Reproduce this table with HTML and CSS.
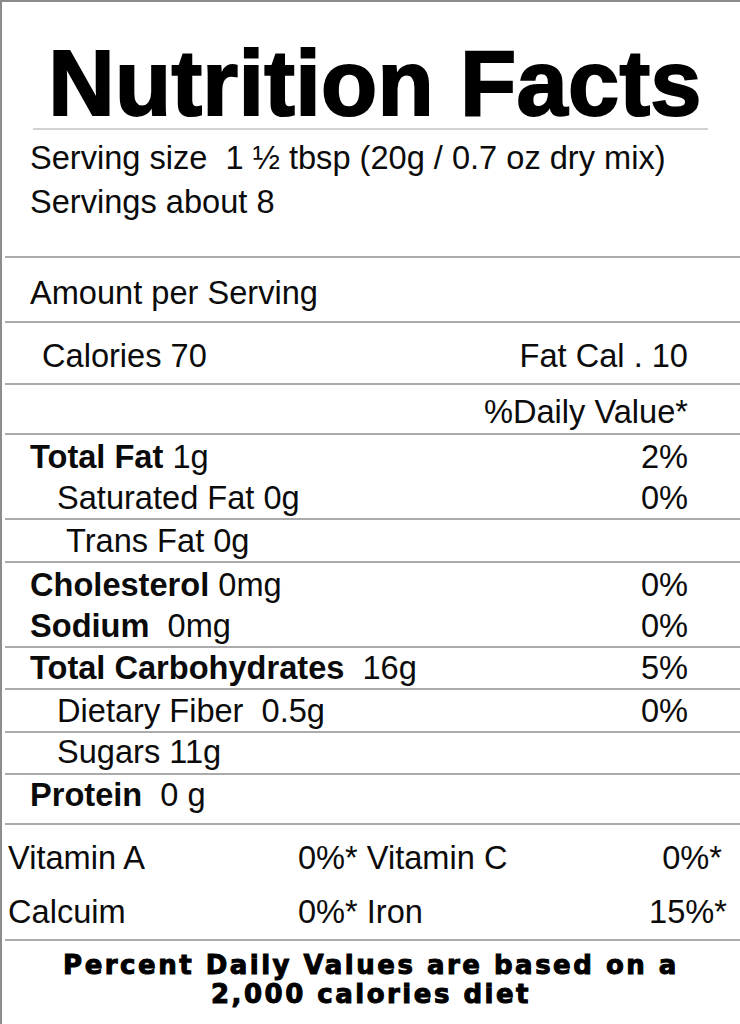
FILE: index.html
```html
<!DOCTYPE html>
<html lang="en">
<head>
<meta charset="utf-8">
<title>Nutrition Facts</title>
<link rel="stylesheet" href="styles.css">
</head>
<body>
<div class="label">
  <header class="title-block"><h1 class="title">Nutrition Facts</h1></header>
  <div class="title-rule"></div>

  <section class="sec serving">
    <p class="sline">Serving size  1 ½ tbsp (20g / 0.7 oz dry mix)</p>
    <p class="sline">Servings about 8</p>
  </section>

  <section class="sec row amount"><span>Amount per Serving</span></section>

  <section class="sec row calories"><span>Calories 70</span><span>Fat Cal . 10</span></section>

  <section class="sec row dv"><span></span><span>%Daily Value*</span></section>

  <section class="sec group g2">
    <div class="nrow"><span><b>Total Fat</b> 1g</span><span>2%</span></div>
    <div class="nrow sub"><span>Saturated Fat 0g</span><span>0%</span></div>
  </section>

  <section class="sec row trans"><span>Trans Fat 0g</span></section>

  <section class="sec group g2">
    <div class="nrow"><span><b>Cholesterol</b> 0mg</span><span>0%</span></div>
    <div class="nrow"><span><b>Sodium</b>  0mg</span><span>0%</span></div>
  </section>

  <section class="sec row carbs"><span><b>Total Carbohydrates</b>  16g</span><span>5%</span></section>

  <section class="sec row fiber sub"><span>Dietary Fiber  0.5g</span><span>0%</span></section>

  <section class="sec row sugars sub"><span>Sugars 11g</span></section>

  <section class="sec row protein"><span><b>Protein</b>  0 g</span></section>

  <section class="sec vitamins">
    <div class="vrow"><span>Vitamin A</span><span>0%* Vitamin C</span><span class="vpct">0%*</span></div>
    <div class="vrow"><span>Calcuim</span><span>0%* Iron</span><span class="vpct wide">15%*</span></div>
  </section>

  <footer class="foot">
    <p>Percent Daily Values are based on a</p>
    <p>2,000 calories diet</p>
  </footer>
</div>
</body>
</html>
```

FILE: styles.css
```css
* { box-sizing: border-box; margin: 0; padding: 0; }

html, body { background: #ffffff; }

body {
  width: 740px;
  height: 1024px;
  overflow: hidden;
  font-family: "Liberation Sans", Arial, sans-serif;
  font-size: 32.6px;
  color: #0b0b0b;
}

.label {
  height: 1024px;
  border-left: 2px solid #8c8c8c;
  border-top: 2px solid #8c8c8c;
}

/* Title */
.title-block {
  height: 126px;
  padding-top: 35px;
  text-align: center;
}

.title {
  font-size: 92px;
  line-height: 92px;
  font-weight: 700;
  color: #000;
  -webkit-text-stroke: 2px #000;
  letter-spacing: 0.3px;
  padding-left: 8px;
}

.title-rule {
  height: 2px;
  margin: 0 32px 0 31px;
  background: #d2d2d2;
}

/* Sections */
.sec {
  margin-left: 3px;
  border-bottom: 2px solid #ababab;
}

.row {
  display: flex;
  justify-content: space-between;
  align-items: center;
  padding-left: 25px;
  padding-right: 52px;
  line-height: 36px;
  white-space: pre;
}

.row b, .nrow b { font-weight: 700; }

.serving {
  height: 128px;
  padding-top: 6px;
  padding-left: 25px;
}

.sline {
  line-height: 44px;
  white-space: pre;
}

.amount { height: 65px; padding-top: 7px; }
.calories { height: 62px; padding-top: 6px; padding-left: 37px; }
.dv { height: 50px; padding-top: 6px; }

.group {
  height: 85px;
  display: flex;
  flex-direction: column;
  padding-top: 1px;
}

.nrow {
  flex: 1;
  display: flex;
  justify-content: space-between;
  align-items: center;
  padding-left: 25px;
  padding-right: 52px;
  white-space: pre;
  line-height: 36px;
}

.nrow.sub, .row.sub { padding-left: 52px; }

.trans { height: 43px; padding-left: 61px; }
.carbs { height: 42px; }
.fiber { height: 43px; }
.sugars { height: 42px; padding-bottom: 3px; }
.protein { height: 50px; padding-bottom: 8px; }

/* Vitamins */
.vitamins {
  height: 116px;
  padding: 6px 18px 0 3px;
}

.vrow {
  display: grid;
  grid-template-columns: 290px 1fr auto;
  height: 54px;
  align-items: center;
  line-height: 36px;
}

.vpct { text-align: right; }
.vpct.wide { margin-right: -5px; }

/* Footer */
.foot {
  padding-top: 10px;
  text-align: center;
  font-family: "DejaVu Sans", "Liberation Sans", sans-serif;
  font-weight: 700;
  font-size: 26px;
  line-height: 29px;
  letter-spacing: 2.5px;
  color: #000;
  -webkit-text-stroke: 1px #000;
}
```
